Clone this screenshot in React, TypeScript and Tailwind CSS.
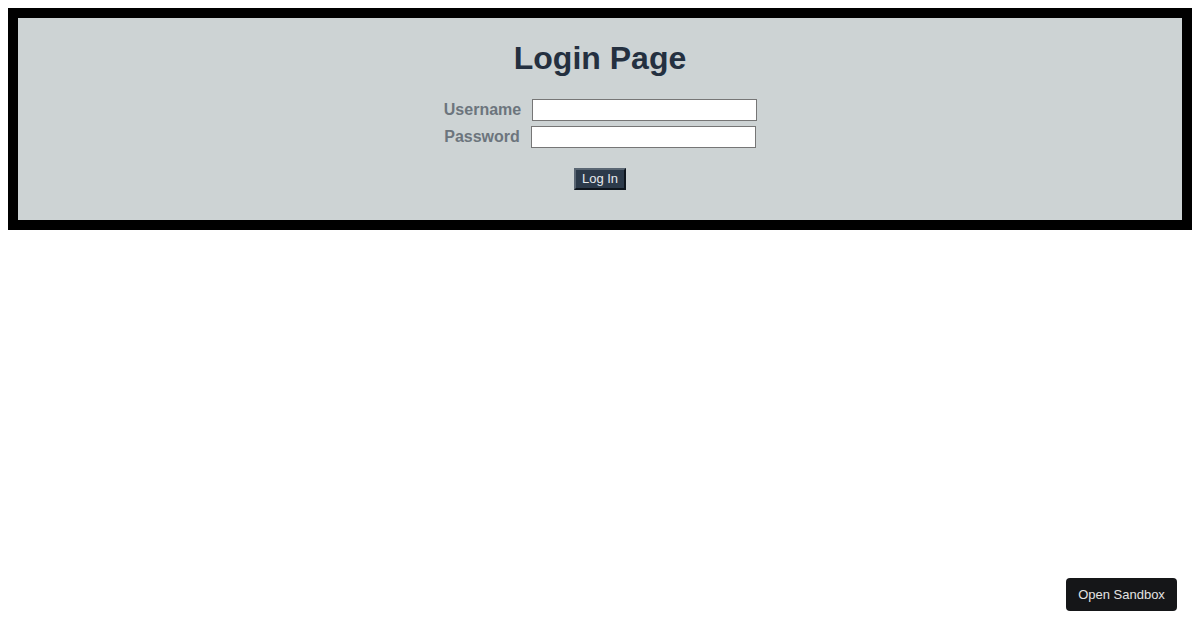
const App = () => {
  return (
    <div className="min-h-screen bg-white p-2 font-['Liberation_Sans',Arial,sans-serif]">
      <div className="border-[10px] border-black bg-[#cdd3d4] pt-[22px] pb-[30px]">
        <h1 className="text-center text-[32px] leading-[37px] font-bold text-[#243040]">
          Login Page
        </h1>
        <form className="mt-[22px] flex flex-col items-center" onSubmit={(e) => e.preventDefault()}>
          <div className="flex h-[22px] items-center gap-[11px] pl-px">
            <label className="text-[16px] leading-[18px] font-bold text-[#6c757d]">Username</label>
            <input
              type="text"
              className="h-[22px] w-[225px] border border-[#767676] bg-white px-1 text-[13px] outline-none"
            />
          </div>
          <div className="mt-[5px] flex h-[22px] items-center gap-[11px]">
            <label className="text-[16px] leading-[18px] font-bold text-[#6c757d]">Password</label>
            <input
              type="password"
              className="h-[22px] w-[225px] border border-[#767676] bg-white px-1 text-[13px] outline-none"
            />
          </div>
          <button
            type="submit"
            className="mt-[20px] h-[22px] w-[52px] border-2 border-t-[#5a6673] border-l-[#5a6673] border-r-[#0e151d] border-b-[#0e151d] bg-[#2c3a4a] text-[13px] leading-[16px] text-[#e6e9ec]"
          >
            Log In
          </button>
        </form>
      </div>
      <button className="fixed right-[23px] bottom-[19px] h-[33px] w-[111px] rounded bg-[#151618] text-[13px] text-[#e3e3e3]">
        Open Sandbox
      </button>
    </div>
  );
};

export default App;
